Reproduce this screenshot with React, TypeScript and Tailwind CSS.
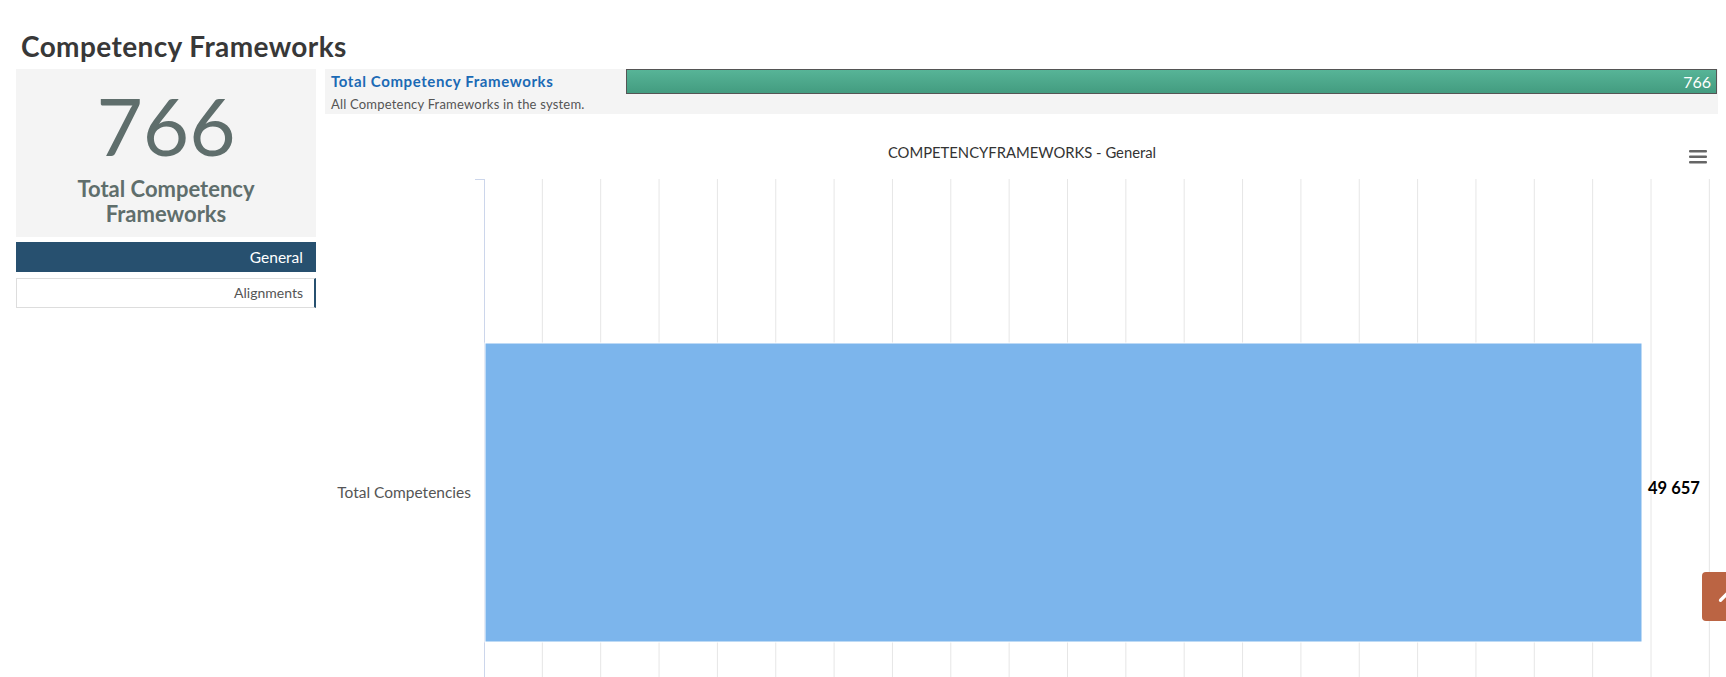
import { ChevronUp } from "lucide-react";

const GRID_START = 159;
const GRID_STEP = 58.35;
const gridLines = Array.from({ length: 22 }, (_, i) => GRID_START + i * GRID_STEP);

function Chart() {
  return (
    <svg width="1393" height="564" className="block">
      <text
        x="697"
        y="44"
        textAnchor="middle"
        fontSize="14.8"
        fill="#333333"
        fontFamily="Lato, sans-serif"
      >
        COMPETENCYFRAMEWORKS - General
      </text>
      {/* export menu */}
      <g fill="#666666">
        <rect x="1364" y="36" width="18" height="2.6" rx="1" />
        <rect x="1364" y="41.5" width="18" height="2.6" rx="1" />
        <rect x="1364" y="47" width="18" height="2.6" rx="1" />
      </g>
      {gridLines.slice(1).map((x) => (
        <line key={x} x1={x} x2={x} y1="65" y2="564" stroke="#e6e6e6" strokeWidth="1" />
      ))}
      <line x1="150" x2="159.5" y1="65.5" y2="65.5" stroke="#ccd6eb" strokeWidth="1" />
      <line x1="159.5" x2="159.5" y1="65" y2="564" stroke="#ccd6eb" strokeWidth="1" />
      <rect x="160" y="229" width="1157" height="299" fill="#7cb5ec" stroke="#ffffff" strokeWidth="1" />
      <text
        x="146"
        y="384"
        textAnchor="end"
        fontSize="15.5"
        fill="#555555"
        fontFamily="Lato, sans-serif"
      >
        Total Competencies
      </text>
      <text
        x="1323"
        y="380"
        fontSize="16.5"
        fontWeight="700"
        fill="#000000"
        fontFamily="Lato, sans-serif"
      >
        49 657
      </text>
    </svg>
  );
}

export default function App() {
  return (
    <div className="h-screen bg-white font-['Lato','Noto_Sans',sans-serif] relative overflow-hidden">
      <div className="pl-4 pr-2 pt-[31px]">
        <h1 className="text-[28px] tracking-[0.4px] font-bold text-[#383838] leading-[30px] pl-[5px]">
          Competency Frameworks
        </h1>

        <div className="flex mt-2 gap-[9px]">
          <div className="w-[300px] shrink-0">
            <div className="h-[168px] bg-[#f4f4f4] flex flex-col items-center pt-3 text-[#5f6e6c]">
              <div className="text-[80px] leading-[88px]">766</div>
              <div className="text-[22px] leading-[25px] font-bold text-center mt-[7px]">
                Total Competency
                <br />
                Frameworks
              </div>
            </div>
            <div className="mt-[5px] h-[30px] bg-[#27506f] text-white text-[15.5px] leading-[30px] text-right pr-[13px]">
              General
            </div>
            <div className="mt-[6px] h-[30px] border border-[#dddddd] border-r-2 border-r-[#27506f] text-[#555555] text-[14px] leading-[28px] text-right pr-[11px]">
              Alignments
            </div>
          </div>

          <div className="w-[1393px] shrink-0">
            <div className="bg-[#f4f4f4] h-[45px]">
              <div className="flex h-[25px]">
                <div className="w-[301px] shrink-0 pl-[6px] text-[15px] tracking-[0.6px] leading-[24px] font-bold text-[#1b6ab5]">
                  Total Competency Frameworks
                </div>
                <div className="flex-1 mr-px border border-[#555555] bg-gradient-to-b from-[#57b497] to-[#439c80] text-white text-[16px] leading-[23px] text-right pr-[5px]">
                  766
                </div>
              </div>
              <div className="pl-[6px] text-[13px] tracking-[0.2px] leading-[20px] text-[#555555]">
                All Competency Frameworks in the system.
              </div>
            </div>
            <Chart />
          </div>
        </div>
      </div>

      <div className="fixed left-[1702px] top-[572px] w-[50px] h-[49px] rounded-[4px] bg-[#bb6443] flex items-center pl-[12px]">
        <ChevronUp size={26} strokeWidth={3} color="#ffffff" />
      </div>
    </div>
  );
}
